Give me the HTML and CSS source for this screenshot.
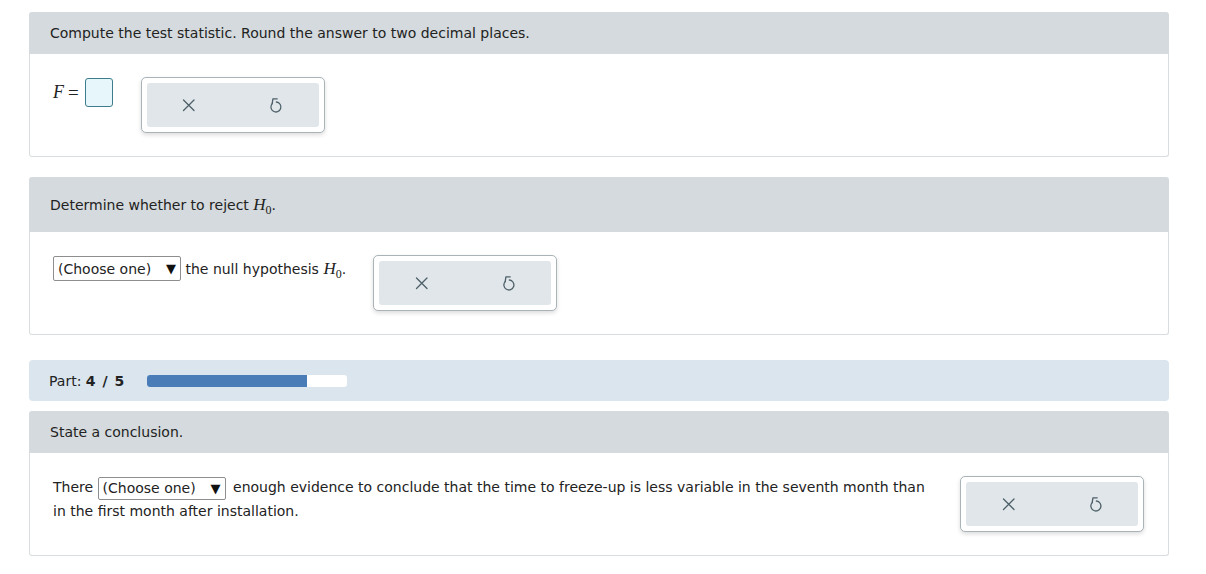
FILE: index.html
```html
<!DOCTYPE html>
<html>
<head>
<meta charset="utf-8">
<link rel="stylesheet" href="styles.css">
</head>
<body>
<div class="page">
  <section class="card">
    <div class="card-head">Compute the test statistic. Round the answer to two decimal places.</div>
    <div class="card-body row-body">
      <div class="formula"><span class="math big">F</span><span class="eq">=</span><span class="answer-box"></span></div>
      <div class="tools">
        <div class="tools-inner">
          <svg class="ic" viewBox="0 0 18 18"><path d="M3.5 4 L14 14.5 M14 4 L3.5 14.5"/></svg>
          <svg class="ic" viewBox="0 0 18 18"><path d="M10.2 2.8 H5.9 L5.2 7.6"/><path d="M5.2 7.6 A5 5 0 1 0 9.4 6"/></svg>
        </div>
      </div>
    </div>
  </section>

  <section class="card">
    <div class="card-head head-tall">Determine whether to reject&nbsp;<span class="math">H<sub>0</sub></span>.</div>
    <div class="card-body row-body">
      <div class="sentence"><span class="choose">(Choose one)<span class="tri">▼</span></span> the null hypothesis <span class="math">H<sub>0</sub></span>.</div>
      <div class="tools">
        <div class="tools-inner">
          <svg class="ic" viewBox="0 0 18 18"><path d="M3.5 4 L14 14.5 M14 4 L3.5 14.5"/></svg>
          <svg class="ic" viewBox="0 0 18 18"><path d="M10.2 2.8 H5.9 L5.2 7.6"/><path d="M5.2 7.6 A5 5 0 1 0 9.4 6"/></svg>
        </div>
      </div>
    </div>
  </section>

  <div class="part">
    <span class="part-label">Part: <b>4 / 5</b></span>
    <div class="progress"><div class="progress-fill" style="width:80%"></div></div>
  </div>

  <section class="card">
    <div class="card-head">State a conclusion.</div>
    <div class="card-body split-body">
      <p class="para">There <span class="choose">(Choose one)<span class="tri">▼</span></span> enough evidence to conclude that the time to freeze-up is less variable in the seventh month than in the first month after installation.</p>
      <div class="tools">
        <div class="tools-inner">
          <svg class="ic" viewBox="0 0 18 18"><path d="M3.5 4 L14 14.5 M14 4 L3.5 14.5"/></svg>
          <svg class="ic" viewBox="0 0 18 18"><path d="M10.2 2.8 H5.9 L5.2 7.6"/><path d="M5.2 7.6 A5 5 0 1 0 9.4 6"/></svg>
        </div>
      </div>
    </div>
  </section>
</div>
</body>
</html>
```

FILE: styles.css
```css
* { box-sizing: border-box; }
html, body { margin: 0; padding: 0; background: #fff; }
body {
  font-family: "DejaVu Sans", Verdana, sans-serif;
  font-size: 14px;
  color: #222;
}
.page {
  width: 1140px;
  margin-left: 29px;
  padding-top: 12px;
}
.card {
  margin-bottom: 20px;
}
.card-head {
  background: #d4dadd;
  height: 42px;
  padding-left: 21px;
  display: flex;
  align-items: center;
  border-radius: 3px 3px 0 0;
}
.head-tall {
  height: 55px;
}
.card-body {
  border: 1px solid #d9dddf;
  border-top: none;
  border-radius: 0 0 3px 3px;
}
.row-body {
  display: flex;
  align-items: flex-start;
  padding: 23px 23px 23px 23px;
}
.formula {
  display: flex;
  align-items: center;
  margin-top: 1px;
  margin-right: 28px;
}
.math {
  font-family: "Liberation Serif", "DejaVu Serif", serif;
  font-style: italic;
  font-size: 17px;
}
.math.big { font-size: 18px; }
.math sub {
  font-style: normal;
  font-size: 12px;
  vertical-align: -4px;
  line-height: 0;
}
.eq {
  font-family: "Liberation Serif", serif;
  font-size: 19px;
  margin: 0 6px 0 4px;
}
.answer-box {
  width: 28px;
  height: 29px;
  border: 1px solid #3d7d8c;
  border-radius: 3px;
  background: #e6f6fa;
}
.tools {
  width: 184px;
  height: 56px;
  padding: 5px;
  border: 1px solid #a9b3b8;
  border-radius: 5px;
  background: #fff;
  box-shadow: 0 2px 4px rgba(0,0,0,0.14);
  flex-shrink: 0;
}
.tools-inner {
  height: 100%;
  background: #e0e6e9;
  border-radius: 3px;
  display: flex;
  align-items: center;
  justify-content: center;
  gap: 69px;
}
.ic {
  width: 18px;
  height: 18px;
  fill: none;
  stroke: #4d5f69;
  stroke-width: 1.3;
  stroke-linecap: round;
  stroke-linejoin: round;
}
.sentence {
  margin-top: 1px;
  margin-right: 27px;
  display: flex;
  align-items: center;
  white-space: pre;
}
.choose {
  display: inline-flex;
  align-items: center;
  justify-content: space-between;
  height: 25px;
  width: 128px;
  padding: 0 4px 0 4px;
  border: 1px solid #8e8e8e;
  border-radius: 2px;
  background: #fff;
  color: #222;
  vertical-align: middle;
}
.tri { font-size: 13px; color: #111; }
.part {
  margin-top: 25px;
  height: 41px;
  background: #dae5ee;
  border-radius: 4px;
  display: flex;
  align-items: center;
  padding-left: 20px;
  margin-bottom: 10px;
}
.part-label { width: 98px; }
.part-label b { font-weight: bold; letter-spacing: 1px; }
.progress {
  width: 200px;
  height: 12px;
  background: #fff;
  border-radius: 3px;
  overflow: hidden;
}
.progress-fill {
  height: 100%;
  background: #4a7db8;
}
.split-body {
  display: flex;
  align-items: flex-start;
  justify-content: space-between;
  padding: 23px 24px 23px 23px;
}
.para {
  margin: 0;
  width: 875px;
  line-height: 23px;
}
.para .choose { height: 23px; margin-right: 3px; }
```
